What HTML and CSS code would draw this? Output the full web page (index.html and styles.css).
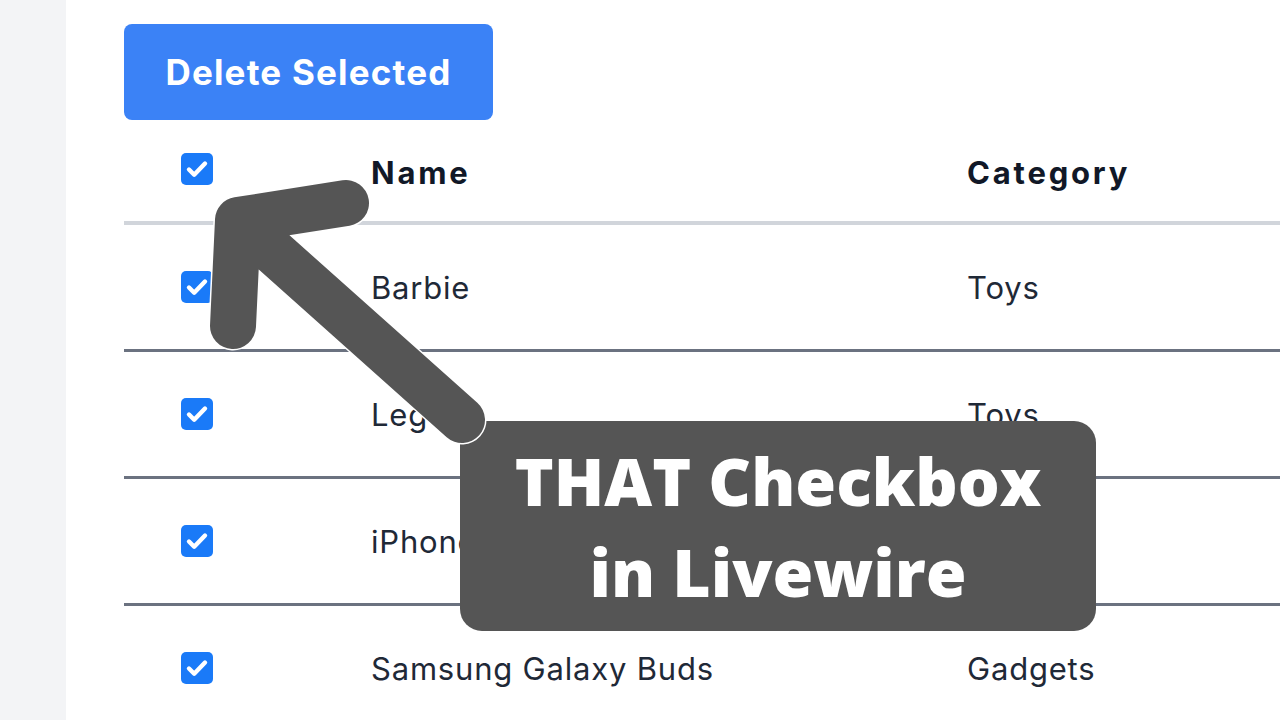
FILE: index.html
```html
<!DOCTYPE html>
<html>
<head>
<meta charset="utf-8">
<link rel="stylesheet" href="styles.css">
</head>
<body>
<div class="page">
  <aside class="side"></aside>
  <main class="main">
    <button class="btn">Delete Selected</button>
    <div class="table">
      <div class="row head">
        <div class="cell cb"><span class="box"><svg viewBox="0 0 32 32"><path d="M8 16.5l5.2 5.2L24 10.5" fill="none" stroke="#fff" stroke-width="4.4" stroke-linecap="round" stroke-linejoin="round"/></svg></span></div>
        <div class="cell name">Name</div>
        <div class="cell cat">Category</div>
      </div>
      <div class="row">
        <div class="cell cb"><span class="box"><svg viewBox="0 0 32 32"><path d="M8 16.5l5.2 5.2L24 10.5" fill="none" stroke="#fff" stroke-width="4.4" stroke-linecap="round" stroke-linejoin="round"/></svg></span></div>
        <div class="cell name">Barbie</div>
        <div class="cell cat">Toys</div>
      </div>
      <div class="row">
        <div class="cell cb"><span class="box"><svg viewBox="0 0 32 32"><path d="M8 16.5l5.2 5.2L24 10.5" fill="none" stroke="#fff" stroke-width="4.4" stroke-linecap="round" stroke-linejoin="round"/></svg></span></div>
        <div class="cell name">Lego</div>
        <div class="cell cat">Toys</div>
      </div>
      <div class="row">
        <div class="cell cb"><span class="box"><svg viewBox="0 0 32 32"><path d="M8 16.5l5.2 5.2L24 10.5" fill="none" stroke="#fff" stroke-width="4.4" stroke-linecap="round" stroke-linejoin="round"/></svg></span></div>
        <div class="cell name">iPhone</div>
        <div class="cell cat">Gadgets</div>
      </div>
      <div class="row last">
        <div class="cell cb"><span class="box"><svg viewBox="0 0 32 32"><path d="M8 16.5l5.2 5.2L24 10.5" fill="none" stroke="#fff" stroke-width="4.4" stroke-linecap="round" stroke-linejoin="round"/></svg></span></div>
        <div class="cell name">Samsung Galaxy Buds</div>
        <div class="cell cat">Gadgets</div>
      </div>
    </div>
  </main>
</div>
<div class="label">THAT Checkbox<br>in Livewire</div>
<svg class="arrow" viewBox="0 0 1280 720" width="1280" height="720">
  <g fill="none" stroke-linecap="round" stroke-linejoin="round">
    <path d="M346 203 L238 220 L233 326 M240 222 L462 420" stroke="#ffffff" stroke-width="49"/>
    <path d="M346 203 L238 220 L233 326 M240 222 L462 420" stroke="#555555" stroke-width="46"/>
  </g>
</svg>
</body>
</html>
```
FILE: styles.css
```css
html, body {
  margin: 0;
  padding: 0;
  width: 1280px;
  height: 720px;
  overflow: hidden;
  background: #f3f4f6;
  font-family: Inter, "Liberation Sans", sans-serif;
}
.page {
  display: flex;
  height: 720px;
}
.side {
  width: 66px;
  flex: none;
  background: #f3f4f6;
}
.main {
  flex: 1;
  background: #ffffff;
  padding: 24px 0 0 58px;
  overflow: hidden;
}
.btn {
  display: block;
  width: 369px;
  height: 96px;
  border: none;
  border-radius: 8px;
  background: #3b82f6;
  color: #ffffff;
  font-family: Inter, "Liberation Sans", sans-serif;
  font-weight: 700;
  font-size: 35px;
  padding: 0;
  letter-spacing: 1.2px;
}
.table {
  width: 1200px;
}
.row {
  display: flex;
  align-items: center;
  height: 124px;
  border-bottom: 3px solid #6b7280;
  color: #1f2937;
  font-size: 31px;
  letter-spacing: 0.8px;
}
.row.last {
  border-bottom: none;
}
.row.head {
  height: 101px;
  border-bottom: 4px solid #d1d5db;
  font-weight: 700;
  color: #111827;
  letter-spacing: 2.8px;
}
.head .cell.name,
.head .cell.cat {
  padding-top: 3px;
}
.cell.cb {
  width: 247px;
  padding-left: 57px;
  box-sizing: border-box;
  display: flex;
  align-items: center;
}
.head .cell.cb {
  padding-bottom: 4px;
}
.cell.name {
  width: 596px;
}
.box {
  display: block;
  width: 32px;
  height: 32px;
  border-radius: 5px;
  background: #1a7af8;
}
.box svg {
  display: block;
  width: 32px;
  height: 32px;
}
.label {
  position: absolute;
  left: 460px;
  top: 421px;
  width: 636px;
  height: 210px;
  box-sizing: border-box;
  border-radius: 22px;
  background: #555555;
  color: #ffffff;
  font-family: "Open Sans", sans-serif;
  font-weight: 800;
  font-size: 66px;
  line-height: 91px;
  text-align: center;
  padding-top: 14px;
}
.arrow {
  position: absolute;
  left: 0;
  top: 0;
}
```
